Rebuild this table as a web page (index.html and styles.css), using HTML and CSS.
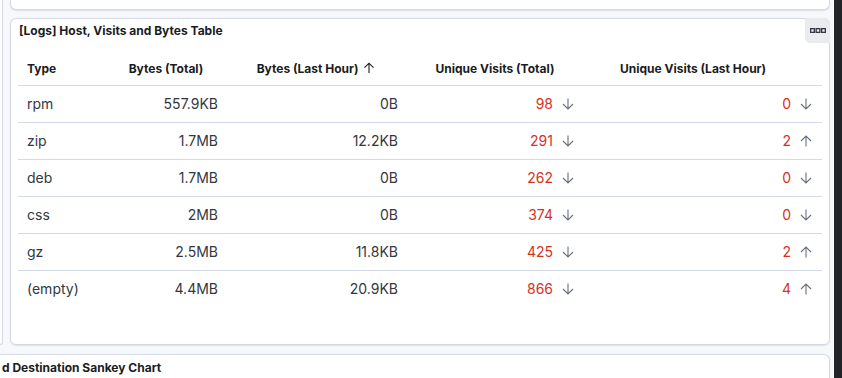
FILE: index.html
```html
<!DOCTYPE html>
<html>
<head>
<meta charset="utf-8">
<link rel="stylesheet" href="styles.css">
</head>
<body>
<div class="page">
  <div class="sliver"></div>
  <div class="main">
    <div class="panel panel-top"></div>
    <div class="panel panel-table">
      <div class="panel-title">[Logs] Host, Visits and Bytes Table</div>
      <button class="options" aria-label="Panel options">
        <svg width="16" height="6" viewBox="0 0 16 6"><rect x="0.65" y="0.65" width="3.7" height="3.7" fill="none" stroke="#343741" stroke-width="1.3"/><rect x="6.15" y="0.65" width="3.7" height="3.7" fill="none" stroke="#343741" stroke-width="1.3"/><rect x="11.65" y="0.65" width="3.7" height="3.7" fill="none" stroke="#343741" stroke-width="1.3"/></svg>
      </button>
      <table class="grid">
        <colgroup>
          <col class="c1"><col class="c2"><col class="c3"><col class="c4"><col class="c5">
        </colgroup>
        <thead>
          <tr>
            <th class="left">Type</th>
            <th>Bytes (Total)</th>
            <th>Bytes (Last Hour) <svg class="sort" width="12" height="12" viewBox="0 0 12 12"><path d="M6 11V1.2M1.5 5.7L6 1.2l4.5 4.5" fill="none" stroke="#1a1c21" stroke-width="1.1"/></svg></th>
            <th>Unique Visits (Total)</th>
            <th class="h5">Unique Visits (Last Hour)</th>
          </tr>
        </thead>
        <tbody>
          <tr><td class="left">rpm</td><td>557.9KB</td><td>0B</td><td><span class="red">98</span><svg class="arr" width="16" height="16" viewBox="0 0 16 16"><path d="M8 2.5v10.5M3 8l5 5 5-5" fill="none" stroke="#69707d" stroke-width="1.1"/></svg></td><td><span class="red">0</span><svg class="arr" width="16" height="16" viewBox="0 0 16 16"><path d="M8 2.5v10.5M3 8l5 5 5-5" fill="none" stroke="#69707d" stroke-width="1.1"/></svg></td></tr>
          <tr><td class="left">zip</td><td>1.7MB</td><td>12.2KB</td><td><span class="red">291</span><svg class="arr" width="16" height="16" viewBox="0 0 16 16"><path d="M8 2.5v10.5M3 8l5 5 5-5" fill="none" stroke="#69707d" stroke-width="1.1"/></svg></td><td><span class="red">2</span><svg class="arr" width="16" height="16" viewBox="0 0 16 16"><path d="M8 13.5V3M3 8l5-5 5 5" fill="none" stroke="#69707d" stroke-width="1.1"/></svg></td></tr>
          <tr><td class="left">deb</td><td>1.7MB</td><td>0B</td><td><span class="red">262</span><svg class="arr" width="16" height="16" viewBox="0 0 16 16"><path d="M8 2.5v10.5M3 8l5 5 5-5" fill="none" stroke="#69707d" stroke-width="1.1"/></svg></td><td><span class="red">0</span><svg class="arr" width="16" height="16" viewBox="0 0 16 16"><path d="M8 2.5v10.5M3 8l5 5 5-5" fill="none" stroke="#69707d" stroke-width="1.1"/></svg></td></tr>
          <tr><td class="left">css</td><td>2MB</td><td>0B</td><td><span class="red">374</span><svg class="arr" width="16" height="16" viewBox="0 0 16 16"><path d="M8 2.5v10.5M3 8l5 5 5-5" fill="none" stroke="#69707d" stroke-width="1.1"/></svg></td><td><span class="red">0</span><svg class="arr" width="16" height="16" viewBox="0 0 16 16"><path d="M8 2.5v10.5M3 8l5 5 5-5" fill="none" stroke="#69707d" stroke-width="1.1"/></svg></td></tr>
          <tr><td class="left">gz</td><td>2.5MB</td><td>11.8KB</td><td><span class="red">425</span><svg class="arr" width="16" height="16" viewBox="0 0 16 16"><path d="M8 2.5v10.5M3 8l5 5 5-5" fill="none" stroke="#69707d" stroke-width="1.1"/></svg></td><td><span class="red">2</span><svg class="arr" width="16" height="16" viewBox="0 0 16 16"><path d="M8 13.5V3M3 8l5-5 5 5" fill="none" stroke="#69707d" stroke-width="1.1"/></svg></td></tr>
          <tr class="last"><td class="left">(empty)</td><td>4.4MB</td><td>20.9KB</td><td><span class="red">866</span><svg class="arr" width="16" height="16" viewBox="0 0 16 16"><path d="M8 2.5v10.5M3 8l5 5 5-5" fill="none" stroke="#69707d" stroke-width="1.1"/></svg></td><td><span class="red">4</span><svg class="arr" width="16" height="16" viewBox="0 0 16 16"><path d="M8 13.5V3M3 8l5-5 5 5" fill="none" stroke="#69707d" stroke-width="1.1"/></svg></td></tr>
        </tbody>
      </table>
    </div>
    <div class="panel panel-bottom">
      <div class="panel-title">d Destination Sankey Chart</div>
    </div>
  </div>
  <div class="gutter"></div>
  <div class="dark"></div>
</div>
</body>
</html>
```
FILE: styles.css
```css
* { box-sizing: border-box; }
html, body { margin: 0; padding: 0; }
body {
  background: #f7f8fc;
  font-family: Inter, "Noto Sans", sans-serif;
  color: #343741;
  width: 842px;
  height: 378px;
  overflow: hidden;
}
.page {
  display: flex;
  height: 378px;
}
.sliver {
  width: 3px;
  height: 345px;
  background: #fff;
  border-right: 1px solid #d3dae6;
  border-bottom: 1px solid #d3dae6;
  border-bottom-right-radius: 4px;
  flex: none;
}
.main {
  margin-left: 7px;
  width: 820px;
  flex: none;
  display: flex;
  flex-direction: column;
}
.gutter { width: 4px; flex: none; }
.dark { width: 8px; flex: none; background: #222329; }
.panel {
  background: #fff;
  border: 1px solid #d3dae6;
  border-radius: 6px;
  box-shadow: 0 1px 2px rgba(0, 0, 0, 0.06), 0 0.5px 1px rgba(0,0,0,0.04);
}
.panel-top {
  height: 10px;
  border-top: none;
  border-radius: 0 0 6px 6px;
  flex: none;
}
.panel-table {
  margin-top: 8px;
  height: 327px;
  position: relative;
  padding: 4px 7px 0 7px;
  flex: none;
}
.panel-title {
  font-size: 12px;
  font-weight: 700;
  line-height: 16px;
  color: #1a1c21;
  padding-left: 1px;
}
.options {
  position: absolute;
  top: -1px;
  right: -1px;
  width: 25px;
  height: 25px;
  border: none;
  margin: 0;
  padding: 0;
  background: #e9ebef;
  border-radius: 0 6px 0 5px;
  display: flex;
  align-items: center;
  justify-content: center;
}
.options svg { display: block; }
.grid {
  margin-top: 14px;
  width: 804px;
  border-collapse: collapse;
  table-layout: fixed;
}
.c1 { width: 88px; }
.c2 { width: 120px; }
.c3 { width: 180px; }
.c4 { width: 178px; }
.c5 { width: 238px; }
.grid th {
  height: 32px;
  font-size: 12px;
  font-weight: 700;
  color: #1a1c21;
  text-align: center;
  padding: 0 8px;
  border-bottom: 1px solid #d3dae6;
  white-space: nowrap;
}
.grid th.left { text-align: left; padding-left: 9px; }
.grid th.h5 { padding-right: 28px; }
.sort { vertical-align: -1px; margin-left: 2px; }
.grid td {
  height: 37px;
  font-size: 14px;
  text-align: right;
  padding: 0 8px;
  border-bottom: 1px solid #d3dae6;
  white-space: nowrap;
  color: #343741;
}
.grid td.left { text-align: left; padding-left: 9px; }
.grid tr.last td { border-bottom: none; }
.red { color: #d6311f; }
.arr { vertical-align: -3px; margin-left: 7px; }
.panel-bottom {
  margin-top: 9px;
  margin-left: -19px;
  flex: 1;
  padding: 5px 8px 0 9px;
  border-bottom: none;
  border-radius: 6px 6px 0 0;
}
```
